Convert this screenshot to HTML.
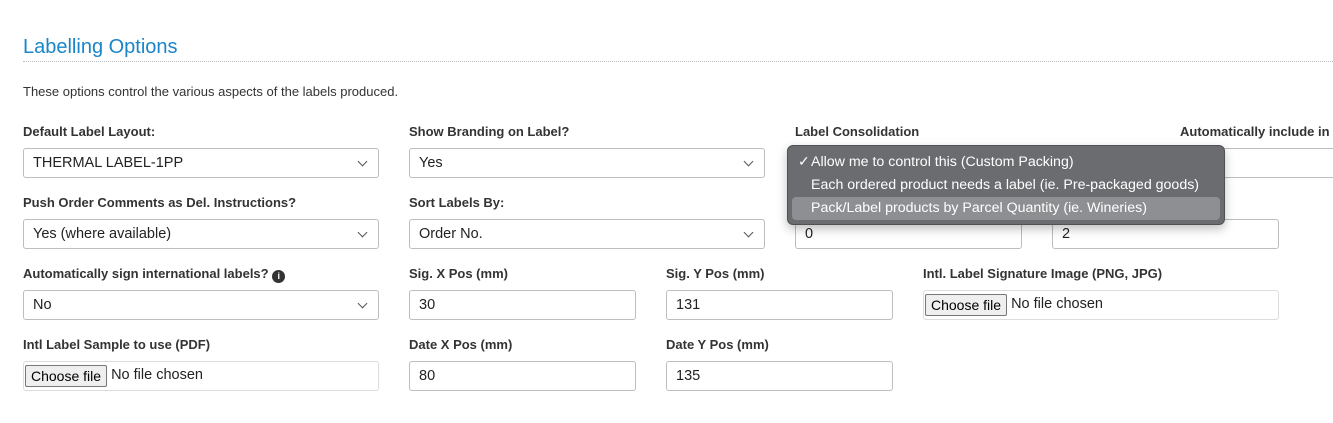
<!DOCTYPE html>
<html><head><meta charset="utf-8"><style>
body{margin:0;width:1333px;height:423px;background:#fff;font-family:"Liberation Sans",sans-serif;position:relative;overflow:hidden;color:#333}
.a{position:absolute;white-space:nowrap}
.t{left:23px;top:36px;font-size:20px;color:#1a85c8}
.hr{left:23px;top:61px;width:1310px;border-top:1px dotted #bbb}
.d{left:23px;top:84px;font-size:13px;color:#333}
.l{font-size:13px;font-weight:bold;color:#333}
.b{box-sizing:border-box;border:1px solid #bdbdbd;border-radius:3px;height:30px;font-size:14.5px;color:#222;line-height:28px;padding-left:9px;background:#fff}
.s::after{content:"";position:absolute;right:12px;top:9px;width:6px;height:6px;border-right:1.5px solid #555;border-bottom:1.5px solid #555;transform:rotate(45deg)}
.f{border-color:#ddd;padding-left:1px;line-height:26px}
.f span.btn{display:inline-block;background:#efefef;border:1px solid #777;border-radius:2px;height:20px;line-height:20px;padding:0 5px;margin-top:3px;vertical-align:top;font-size:14px;color:#000}
.dd{left:787px;top:145px;width:438px;height:80px;background:#6a6c70;border:1px solid #4f5155;border-radius:6px;box-sizing:border-box;box-shadow:0 4px 10px rgba(0,0,0,.25)}
.it{position:absolute;left:4px;width:428px;height:23px;line-height:23px;font-size:14.2px;color:#fff;padding-left:19px;box-sizing:border-box;border-radius:4px}
</style></head><body>
<div class="a t">Labelling Options</div>
<div class="a hr"></div>
<div class="a d">These options control the various aspects of the labels produced.</div>

<div class="a l" style="left:23px;top:124px">Default Label Layout:</div>
<div class="a l" style="left:409px;top:124px">Show Branding on Label?</div>
<div class="a l" style="left:795px;top:124px">Label Consolidation</div>
<div class="a l" style="left:1180px;top:124px">Automatically include in labels</div>
<div class="a b s" style="left:23px;top:148px;width:356px">THERMAL LABEL-1PP</div>
<div class="a b s" style="left:409px;top:148px;width:356px">Yes</div>
<div class="a b" style="left:795px;top:148px;width:356px"></div>
<div class="a b" style="left:1180px;top:148px;width:200px"></div>

<div class="a l" style="left:23px;top:195px">Push Order Comments as Del. Instructions?</div>
<div class="a l" style="left:409px;top:195px">Sort Labels By:</div>
<div class="a b s" style="left:23px;top:219px;width:356px">Yes (where available)</div>
<div class="a b s" style="left:409px;top:219px;width:356px">Order No.</div>
<div class="a b" style="left:795px;top:219px;width:227px">0</div>
<div class="a b" style="left:1052px;top:219px;width:227px">2</div>

<div class="a l" style="left:23px;top:266px">Automatically sign international labels? <span style="display:inline-block;width:13px;height:13px;border-radius:50%;background:#333;color:#fff;font-size:9px;line-height:13px;text-align:center;vertical-align:-1px">i</span></div>
<div class="a l" style="left:409px;top:266px">Sig. X Pos (mm)</div>
<div class="a l" style="left:666px;top:266px">Sig. Y Pos (mm)</div>
<div class="a l" style="left:923px;top:266px">Intl. Label Signature Image (PNG, JPG)</div>
<div class="a b s" style="left:23px;top:290px;width:356px">No</div>
<div class="a b" style="left:409px;top:290px;width:227px">30</div>
<div class="a b" style="left:666px;top:290px;width:227px">131</div>
<div class="a b f" style="left:923px;top:290px;width:356px"><span class="btn">Choose file</span> No file chosen</div>

<div class="a l" style="left:23px;top:337px">Intl Label Sample to use (PDF)</div>
<div class="a l" style="left:409px;top:337px">Date X Pos (mm)</div>
<div class="a l" style="left:666px;top:337px">Date Y Pos (mm)</div>
<div class="a b f" style="left:23px;top:361px;width:356px"><span class="btn">Choose file</span> No file chosen</div>
<div class="a b" style="left:409px;top:361px;width:227px">80</div>
<div class="a b" style="left:666px;top:361px;width:227px">135</div>

<div class="a dd">
<div class="it" style="top:5px"><span style="position:absolute;left:6px">✓</span>Allow me to control this (Custom Packing)</div>
<div class="it" style="top:28px">Each ordered product needs a label (ie. Pre-packaged goods)</div>
<div class="it" style="top:51px;background:#8d8f92">Pack/Label products by Parcel Quantity (ie. Wineries)</div>
</div>
</body></html>
